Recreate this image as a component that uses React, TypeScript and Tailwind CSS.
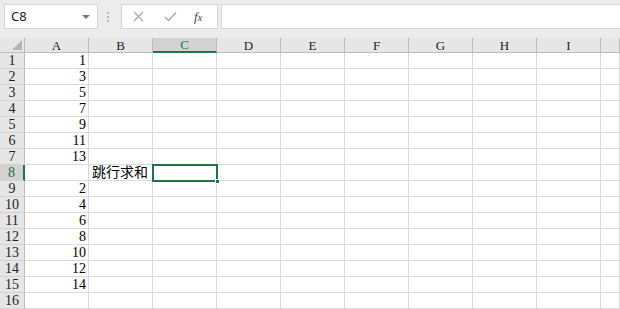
import React from "react";

const cols = ["A", "B", "C", "D", "E", "F", "G", "H", "I", ""];

const values: Record<number, { a?: string; b?: string }> = {
  1: { a: "1" },
  2: { a: "3" },
  3: { a: "5" },
  4: { a: "7" },
  5: { a: "9" },
  6: { a: "11" },
  7: { a: "13" },
  8: { b: "跳行求和" },
  9: { a: "2" },
  10: { a: "4" },
  11: { a: "6" },
  12: { a: "8" },
  13: { a: "10" },
  14: { a: "12" },
  15: { a: "14" },
  16: {},
};

const cellFont = { fontFamily: '"Liberation Serif", "Noto Sans CJK SC", serif' };

function FormulaBar() {
  return (
    <div className="flex h-[38px] bg-[#ececec] pl-[4px] pt-[4px]">
      <div className="relative flex h-[25px] w-[94px] items-center border border-[#d4d4d4] bg-white pl-[6px]">
        <span
          className="text-[13px] text-[#222]"
          style={{ fontFamily: '"Noto Sans", "Liberation Sans", sans-serif' }}
        >
          C8
        </span>
        <span className="absolute right-[7px] top-[10px] h-0 w-0 border-x-[4px] border-t-[4px] border-x-transparent border-t-[#777]" />
      </div>
      <div className="ml-[9px] flex h-[25px] flex-col items-center justify-center gap-[2px]">
        <span className="h-[2px] w-[2px] bg-[#b8b8b8]" />
        <span className="h-[2px] w-[2px] bg-[#b8b8b8]" />
        <span className="h-[2px] w-[2px] bg-[#b8b8b8]" />
      </div>
      <div className="ml-[12px] flex h-[25px] w-[97px] items-center border border-[#d4d4d4] bg-white">
        <svg className="ml-[11px]" width="11" height="11" viewBox="0 0 11 11">
          <path d="M1 1 L10 10 M10 1 L1 10" stroke="#a8a8a8" strokeWidth="1.2" fill="none" />
        </svg>
        <svg className="ml-[20px]" width="13" height="11" viewBox="0 0 13 11">
          <path d="M1 6 L4.5 9.5 L12 1.5" stroke="#a8a8a8" strokeWidth="1.4" fill="none" />
        </svg>
        <span
          className="ml-[17px] text-[13px] italic text-[#444]"
          style={{ fontFamily: '"Liberation Serif", serif' }}
        >
          f<span className="text-[10px]">x</span>
        </span>
      </div>
      <div className="ml-[3px] h-[25px] flex-1 border border-r-0 border-[#d4d4d4] bg-white" />
    </div>
  );
}

export default function App() {
  const rows = Array.from({ length: 16 }, (_, i) => i + 1);
  return (
    <div className="h-[309px] w-[620px] overflow-hidden bg-white">
      <FormulaBar />
      <div className="relative">
        <div className="grid grid-cols-[25px_repeat(9,64px)_1fr]" style={cellFont}>
          <div className="relative h-[15px] border-b border-r border-[#bdbdbd] bg-[#e6e6e6]">
            <span className="absolute bottom-[2px] right-[2px] h-0 w-0 border-b-[10px] border-l-[10px] border-b-[#b5b5b5] border-l-transparent" />
          </div>
          {cols.map((c, i) => (
            <div
              key={i}
              className={
                c === "C"
                  ? "flex h-[15px] items-center justify-center border-b-2 border-r border-b-[#217346] border-r-[#bdbdbd] bg-[#d2d2d2] text-[13px] leading-none text-[#217346]"
                  : "flex h-[15px] items-center justify-center border-b border-r border-[#bdbdbd] bg-[#e6e6e6] text-[13px] leading-none text-[#222]"
              }
            >
              {c}
            </div>
          ))}
          {rows.map((r) => (
            <React.Fragment key={r}>
              <div
                className={
                  r === 8
                    ? "flex h-[16px] items-center justify-center border-b border-r-2 border-b-[#d4d4d4] border-r-[#217346] bg-[#d2d2d2] pt-[1px] text-[14px] leading-none text-[#217346]"
                    : "flex h-[16px] items-center justify-center border-b border-r border-b-[#d4d4d4] border-r-[#bdbdbd] bg-[#e6e6e6] pt-[1px] text-[14px] leading-none text-[#222]"
                }
              >
                {r}
              </div>
              {cols.map((_, ci) => (
                <div
                  key={ci}
                  className={
                    ci === 0
                      ? "flex h-[16px] items-center justify-end border-b border-r border-[#dadada] pr-[2px] pt-[1px] text-[14px] leading-none text-black"
                      : "flex h-[16px] items-center overflow-visible whitespace-nowrap border-b border-r border-[#dadada] pl-[3px] pt-[1px] text-[14px] leading-none text-black"
                  }
                >
                  {ci === 0 ? values[r].a : ci === 1 ? values[r].b : null}
                </div>
              ))}
            </React.Fragment>
          ))}
        </div>
        <div className="absolute left-[152px] top-[126px] h-[18px] w-[66px] border-2 border-[#217346]" />
        <div className="absolute left-[215px] top-[141px] h-[5px] w-[5px] border border-white bg-[#217346]" />
      </div>
    </div>
  );
}
